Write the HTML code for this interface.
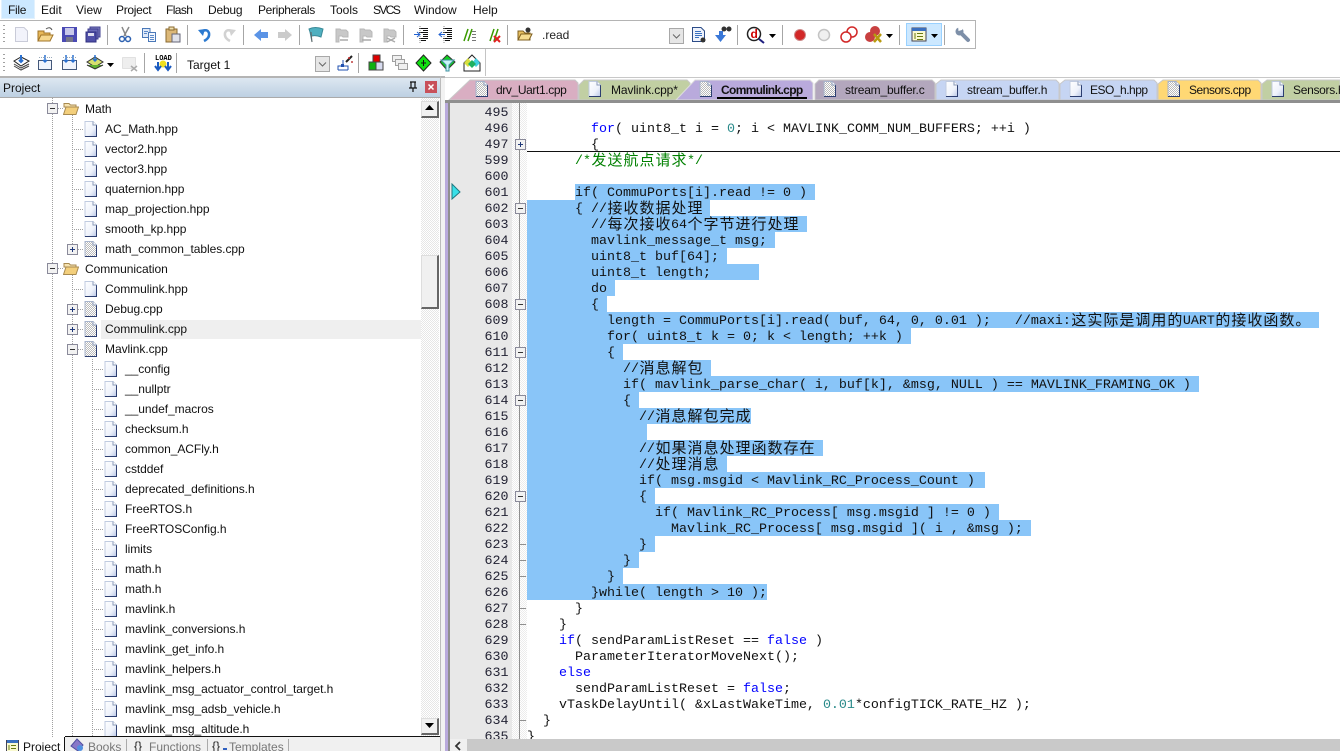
<!DOCTYPE html>
<html><head><meta charset="utf-8"><title>Keil</title>
<style>
html,body{margin:0;padding:0;background:#fff;width:1340px;height:751px;overflow:hidden}
body{position:relative;font-family:"Liberation Sans","Noto Sans CJK SC",sans-serif;font-size:12px;color:#000}
.a{position:absolute;white-space:pre}
.m{position:absolute;top:1px;line-height:19px;height:19px;white-space:pre;font-size:12px;color:#111}
.t{position:absolute;line-height:20px;height:20px;white-space:pre;font-size:12px;color:#111;letter-spacing:-.05px}
.l{position:absolute;left:449px;width:59.5px;height:16px;margin-top:2px;text-align:right;font:13.33px/16px "Liberation Mono",monospace;color:#223}
.c{position:absolute;left:527px;height:16px;margin-top:2px;white-space:pre;font:13.33px/16px "Liberation Mono","Noto Sans CJK SC",monospace;color:#111}
.c i{font:15px/16px "Noto Sans CJK SC",sans-serif;font-style:normal;display:inline-block;width:16px;text-align:center;height:16px;vertical-align:top;position:relative;top:-2px}
.s{position:absolute;height:16px;background:#89c5f8}
.b{color:#0000ff}.n{color:#2a8a8a}.g{color:#008000}
.tab{position:absolute;top:81px;line-height:18px;white-space:pre;font-size:12px;color:#111}
</style></head><body>
<svg width="0" height="0" style="position:absolute"><defs>
<linearGradient id="dg" x1="0" y1="0" x2="1" y2="1"><stop offset="0" stop-color="#fff"/><stop offset=".6" stop-color="#eef2fb"/><stop offset="1" stop-color="#b9c7e6"/></linearGradient>
<pattern id="ht" width="2" height="2" patternUnits="userSpaceOnUse"><rect width="2" height="2" fill="#fff"/><rect width="1" height="1" fill="#bbb"/><rect x="1" y="1" width="1" height="1" fill="#bbb"/></pattern>
<symbol id="d" viewBox="0 0 13 16" width="13" height="16"><path d="M1 .5H9L12.5 4V15.5H1Z" fill="url(#dg)" stroke="#c0cbe0"/><path d="M12.5 4V15.5H1" fill="none" stroke="#2c3e70"/><path d="M9 .5V4H12.5" fill="#fff" stroke="#8a9ab8"/></symbol>
<symbol id="h" viewBox="0 0 13 16" width="13" height="16"><path d="M1 .5H9L12.5 4V15.5H1Z" fill="url(#ht)" stroke="#a8b4cc"/><path d="M12.5 4V15.5H1" fill="none" stroke="#2c3e70"/><path d="M9 .5V4H12.5" fill="#fff" stroke="#8a9ab8"/></symbol>
<symbol id="f" viewBox="0 0 16 13" width="16" height="13"><path d="M1 3V1.5H6L7.500 3H13V5H1Z" fill="#f6e3b0" stroke="#a88a50"/><path d="M.5 12.500L3 5H15.500L13 12.500Z" fill="#f3cf7c" stroke="#a88a50"/></symbol>
<symbol id="pl" viewBox="0 0 11 11" width="11" height="11"><rect x=".5" y=".5" width="10" height="10" fill="#f2f2f2" stroke="#8a8a9a"/><path d="M3 5.500H8M5.500 3V8" stroke="#223a7a"/></symbol>
<symbol id="mi" viewBox="0 0 11 11" width="11" height="11"><rect x=".5" y=".5" width="10" height="10" fill="#f2f2f2" stroke="#8a8a9a"/><path d="M3 5.500H8" stroke="#333"/></symbol>
<symbol id="gf" viewBox="0 0 15 16" width="15" height="16"><path d="M2 15V2H6L7 3H12L14 5V10H9L8 9H5V15Z" fill="#c8c8c8" stroke="#b8b8b8"/></symbol>
<symbol id="dn" viewBox="0 0 7 4" width="7" height="4"><path d="M0 0H7L3.500 4Z" fill="#000"/></symbol>
<symbol id="cb" viewBox="0 0 15 16" width="15" height="16"><rect x=".5" y=".5" width="14" height="15" fill="#e6e6e6" stroke="#a8a8a8"/><path d="M4 6.500L7.500 10L11 6.500" fill="none" stroke="#666"/></symbol>
</defs></svg>

<!-- menu -->
<div class="a" style="left:1px;top:0;width:32px;height:18px;background:#cce8ff;border:1px solid #e2f1fd;border-top:0"></div>
<span class="m" style="left:8px;letter-spacing:-.3px">File</span><span class="m" style="left:41px">Edit</span><span class="m" style="left:76px">View</span><span class="m" style="left:116px;letter-spacing:-.3px">Project</span><span class="m" style="left:166px;letter-spacing:-.6px">Flash</span><span class="m" style="left:208px;letter-spacing:-.2px">Debug</span><span class="m" style="left:258px;letter-spacing:-.35px">Peripherals</span><span class="m" style="left:330px">Tools</span><span class="m" style="left:373px;letter-spacing:-1.6px">SVCS</span><span class="m" style="left:414px">Window</span><span class="m" style="left:473px">Help</span>

<!-- toolbar chrome -->
<div class="a" style="left:0;top:20px;width:975px;height:1px;background:#b4b4b4"></div>
<div class="a" style="left:0;top:21px;width:2px;height:28px;background:#fff"></div>
<div class="a" style="left:975px;top:20px;width:1px;height:29px;background:#b4b4b4"></div>
<div class="a" style="left:0;top:48px;width:976px;height:1px;background:#b4b4b4"></div>
<div class="a" style="left:0;top:76px;width:445px;height:2px;background:#b4b4b4"></div>
<div class="a" style="left:485px;top:49px;width:1px;height:28px;background:#c4c4c4"></div>
<div class="a" style="left:906px;top:23px;width:34px;height:21px;background:#cce8ff;border:1px solid #99d1ff"></div>

<svg class="a" style="left:0;top:0" width="1340" height="78" viewBox="0 0 1340 78">
<g fill="#a0a0a0"><rect x="3" y="25" width="2" height="1"/><rect x="3" y="29" width="2" height="1"/><rect x="3" y="33" width="2" height="1"/><rect x="3" y="37" width="2" height="1"/><rect x="3" y="41" width="2" height="1"/><rect x="3" y="54" width="2" height="1"/><rect x="3" y="58" width="2" height="1"/><rect x="3" y="62" width="2" height="1"/><rect x="3" y="66" width="2" height="1"/><rect x="3" y="70" width="2" height="1"/></g>
<g fill="#a6a6a6"><rect x="107" y="25" width="1" height="20"/><rect x="187" y="25" width="1" height="20"/><rect x="243" y="25" width="1" height="20"/><rect x="299" y="25" width="1" height="20"/><rect x="403" y="25" width="1" height="20"/><rect x="507" y="25" width="1" height="20"/><rect x="737" y="25" width="1" height="20"/><rect x="782" y="25" width="1" height="20"/><rect x="899" y="25" width="1" height="20"/><rect x="944" y="25" width="1" height="20"/><rect x="144" y="53" width="1" height="20"/><rect x="176" y="53" width="1" height="20"/><rect x="358" y="53" width="1" height="20"/></g>
<!-- row 1 -->
<path d="M15.500 27.500H24L27.500 31V41.500H15.500Z" fill="#f2f3fb" stroke="#c9cbd8"/>
<path d="M38 41V31H44V33H50V41Z" fill="#e8b858" stroke="#a07428"/><path d="M38 41L41 35H53L50 41Z" fill="#f6d78c" stroke="#a07428"/><path d="M46 29Q50 26 52 30" fill="none" stroke="#555"/>
<rect x="62" y="27" width="15" height="15" fill="#4a4ab4"/><rect x="65" y="28" width="9" height="7" fill="#c8c8ea"/><rect x="66" y="37" width="7" height="5" fill="#778"/>
<rect x="90" y="27" width="10" height="10" fill="#8080c0" stroke="#404090"/><rect x="88" y="29" width="10" height="10" fill="#6a6ab8" stroke="#404090"/><rect x="86" y="32" width="10" height="10" fill="#5050a8" stroke="#303080"/><rect x="88" y="33" width="6" height="3" fill="#dde"/>
<path d="M122 27L126 36M129 27L124 36" stroke="#888" stroke-width="1.500"/><circle cx="122" cy="39" r="2.500" fill="none" stroke="#2c60b0" stroke-width="1.500"/><circle cx="128" cy="39" r="2.500" fill="none" stroke="#2c60b0" stroke-width="1.500"/>
<path d="M142.500 28.500H150V37.500H142.500Z" fill="#dfe9f8" stroke="#4a78b8"/><path d="M148.500 32.500H155.500V41.500H148.500Z" fill="#f2f6fd" stroke="#4a78b8"/><path d="M144 31.500H148M144 33.500H147M150 35.500H154M150 37.500H154M150 39.500H154" stroke="#5a88c8"/>
<rect x="166" y="29" width="11" height="13" fill="#dcb878" stroke="#8a6a30"/><rect x="169" y="27" width="5" height="3" fill="#f0e0b0" stroke="#8a6a30"/><rect x="172" y="34" width="8" height="8" fill="#e0e2ea" stroke="#667"/>
<path d="M201 32Q207 28 209 33Q210 38 204 41" fill="none" stroke="#2c7ad0" stroke-width="2.500"/><path d="M198 30L205 29L203 36Z" fill="#2c7ad0"/>
<path d="M233 32Q227 28 225 33Q224 38 230 41" fill="none" stroke="#d2d2d2" stroke-width="2.500"/><path d="M236 30L229 29L231 36Z" fill="#d2d2d2"/>
<path d="M254 35L261 29V32H268V38H261V41Z" fill="#5b94e6"/><path d="M292 35L285 29V32H278V38H285V41Z" fill="#cbcbcb"/>
<path d="M312 42L310 32L309 29Q315 26 323 29L321 37Q316 35 312 36" fill="#4fb0c0" stroke="#3a8a98"/><path d="M312 42L311 32" stroke="#666"/>
<use href="#gf" x="334" y="27"/><use href="#gf" x="358" y="27"/><use href="#gf" x="382" y="27"/>
<path d="M340 40H348M362 40H371M387 38L395 42M395 38L387 42" stroke="#aaa" stroke-width="1.500"/>
<g stroke="#111"><path d="M419 28.500H428M423 30.500H428M419 32.500H428M423 34.500H428M423 36.500H428M419 38.500H428M421 40.500H426"/><path d="M443 28.500H452M447 30.500H452M443 32.500H452M447 34.500H452M447 36.500H452M443 38.500H452M445 40.500H450"/><path d="M420 26V43M444 26V43" stroke="#888" stroke-dasharray="1 1"/></g>
<path d="M414 34.500H420M417 32L420 34.500L417 37M445 34.500H439M442 32L439 34.500L442 37" stroke="#2060d0" fill="none"/>
<path d="M464 41L468 29M468 41L472 29M490 41L494 29M494 41L498 29" stroke="#3a9a00" stroke-width="1.500"/><path d="M472 31.500H476M472 34.500H476M472 37.500H476M472 40.500H476" stroke="#777"/>
<path d="M494 36L500 42M500 36L494 42" stroke="#e02020" stroke-width="2"/>
<path d="M518 40V31H523L525 33H530V40Z" fill="#e8c060" stroke="#806020"/><path d="M518 40L521 34H532L529 40Z" fill="#f6dc90" stroke="#806020"/><circle cx="528" cy="30" r="2.500" fill="#333"/>
<use href="#cb" x="669" y="28"/>
<path d="M692.500 27.500H701L704.500 31V41.500H692.500Z" fill="#eef2fb" stroke="#2c4c88"/><path d="M695 31.500H701M695 33.500H702M695 35.500H702M695 37.500H699" stroke="#3a70c0"/><circle cx="703" cy="40" r="2.500" fill="#333"/>
<path d="M715 35H719V31H723V35H726L720.500 42Z" fill="#3a78d8"/><circle cx="724" cy="29" r="2.500" fill="#333"/><circle cx="729" cy="29" r="2.500" fill="#333"/>
<circle cx="754" cy="34" r="6.500" fill="#fff" stroke="#222" stroke-width="1.500"/><path d="M759 39L764 43" stroke="#202080" stroke-width="2"/><text x="750.500" y="38" font-family="Liberation Sans" font-size="12" font-weight="bold" fill="#d00000">d</text>
<use href="#dn" x="769" y="34"/>
<circle cx="800" cy="35" r="5.500" fill="#d22828" stroke="#c88"/><circle cx="824" cy="35" r="5.500" fill="#f0f0f0" stroke="#c4c4c4" stroke-width="1.500"/>
<circle cx="852" cy="32" r="5" fill="#fff" stroke="#d22828" stroke-width="1.500"/><circle cx="846" cy="37" r="5" fill="#fff" stroke="#d22828" stroke-width="1.500"/>
<circle cx="875" cy="31" r="5" fill="#c84040"/><circle cx="870" cy="37" r="5" fill="#c84040"/><path d="M874 34L881 42M881 34L874 42" stroke="#b89a10" stroke-width="2.500"/>
<use href="#dn" x="886" y="34"/>
<rect x="912" y="28" width="14" height="13" fill="#fafad0" stroke="#445"/><rect x="912" y="28" width="14" height="3" fill="#3a70c0"/><path d="M915 33V39M917 33.500H923M917 36.500H923M917 39.500H923" stroke="#6a7a10"/><use href="#dn" x="931" y="34"/>
<path d="M961 33L968 40" stroke="#7d8fa8" stroke-width="4" stroke-linecap="round"/><circle cx="959.500" cy="31.500" r="4" fill="#7d8fa8"/><path d="M958 26L958.500 31L962 30L964 27Z" fill="#fff"/>
<!-- row 2 -->
<path d="M14 61L21 57L29 61L21 66Z" fill="#fff" stroke="#222"/><path d="M14 64L21 68L29 64M14 66L21 70L29 66" fill="none" stroke="#444"/><path d="M21 55V62M19 60L21 62L23 60" stroke="#2a70d0" stroke-width="2" fill="none"/>
<g fill="#f0f4fc" stroke="#44587a"><rect x="38.500" y="60.500" width="13" height="9"/><rect x="62.500" y="60.500" width="14" height="9"/></g><path d="M45 55V62M43 60L45 62L47 60M66 55V62M64 60L66 62L68 60M73 55V62M71 60L73 62L75 60" stroke="#2a70d0" stroke-width="1.500" fill="none"/><path d="M39 57.500H52M63 57.500H77" stroke="#9ab" stroke-dasharray="1 1"/>
<path d="M87 62L95 57L103 62L95 67Z" fill="#d6e070" stroke="#333"/><path d="M87 65L95 69L103 65" fill="#60b030" stroke="#333"/><path d="M95 55V61M93 59L95 61L97 59" stroke="#2a70d0" stroke-width="1.500" fill="none"/><use href="#dn" x="107" y="63"/>
<rect x="122.500" y="57.500" width="13" height="11" fill="#eee" stroke="#ccc" stroke-dasharray="1 1"/><path d="M131 66L137 71M137 66L131 71" stroke="#aaa" stroke-width="1.500"/>
<text x="155" y="60" font-family="Liberation Mono" font-size="7" font-weight="bold" fill="#000">LOAD</text><circle cx="163" cy="64" r="3.500" fill="#f0e020"/><path d="M158 62V69M155 66L158 70L161 66M168 62V69M165 66L168 70L171 66" stroke="#1a5ac0" stroke-width="2" fill="none"/>
<text x="187" y="69" font-family="Liberation Sans" font-size="12" fill="#111">Target 1</text>
<use href="#cb" x="315" y="56"/>
<path d="M346 62L352 56" stroke="#222" stroke-width="2"/><path d="M343 60V66M338 70H348M338 70V66H348V70" fill="none" stroke="#2050b0"/><rect x="341" y="64" width="3" height="3" fill="#2050b0"/><circle cx="349" cy="58" r="1" fill="#d03030"/><circle cx="352" cy="62" r="1" fill="#c04040"/>
<rect x="373" y="55" width="7" height="7" fill="#e00000" stroke="#444"/><rect x="369" y="62" width="7" height="8" fill="#10b010" stroke="#444"/><rect x="376" y="62" width="7" height="8" fill="#d8dcf0" stroke="#444"/>
<g fill="#f0f0f0" stroke="#a0a0a0"><rect x="392.500" y="55.500" width="9" height="6"/><rect x="395.500" y="59.500" width="9" height="6"/><rect x="398.500" y="63.500" width="9" height="6"/></g>
<path d="M423.500 55L431 63L423.500 71L416 63Z" fill="#10e010" stroke="#222"/><path d="M421 63H426M423.500 60V66" stroke="#111"/>
<path d="M447 55L455 62L447 70L440 62Z" fill="#10d020" stroke="#333"/><path d="M441 60H454L449 65V71H446V65Z" fill="#c8f4f8" stroke="#4090a0"/>
<path d="M472 55L480 63V71H464V63Z" fill="#fff" stroke="#222"/><path d="M468 58L472 63L468 67L464 63Z" fill="#d8e040"/><path d="M476 58L480 63L476 67L472 63Z" fill="#40d0e0"/><path d="M472 60L476 64L472 68L468 64Z" fill="#20b060"/>
</svg>
<span class="a" style="left:542px;top:28px;line-height:15px;color:#222">.read</span>

<!-- project header -->
<div class="a" style="left:0;top:78px;width:441px;height:19px;background:linear-gradient(#dde7f1,#bdd0e2)"></div>
<div class="a" style="left:0;top:97px;width:441px;height:1px;background:#aaa"></div>
<span class="a" style="left:3px;top:80px;line-height:17px;color:#111">Project</span>
<svg class="a" style="left:408px;top:80px" width="30" height="15"><path d="M2 2H8M3 2V8H7V2M1 8H9M5 8V12" fill="none" stroke="#111" stroke-width="1.200"/><rect x="17" y="1" width="12" height="12" fill="#c8505a"/><path d="M20.500 4.500L25.500 9.500M25.500 4.500L20.500 9.500" stroke="#fff" stroke-width="1.500"/></svg>

<!-- tree -->
<div class="a" style="left:0;top:98px;width:441px;height:639px;overflow:hidden;background:#fff">
<div class="a" style="left:101px;top:222px;width:320px;height:19px;background:#efefef"></div>
<div class="a" style="left:421px;top:0;width:18px;height:639px;background-color:#f4f4f4;background-image:conic-gradient(#e6e6e6 25%,#fff 0 50%,#e6e6e6 0 75%,#fff 0);background-size:2px 2px"></div>
<div class="a" style="left:421px;top:3px;width:15px;height:14px;background:#f0f0f0;border:1px solid #ddd;border-right:2px solid #666;border-bottom:2px solid #666"></div>
<svg class="a" style="left:425px;top:7px" width="10" height="6"><path d="M0 5H9L4.500 0Z"/></svg>
<div class="a" style="left:421px;top:157px;width:15px;height:51px;background:#f0f0f0;border:1px solid #ddd;border-right:2px solid #666;border-bottom:2px solid #666"></div>
<div class="a" style="left:421px;top:620px;width:15px;height:14px;background:#f0f0f0;border:1px solid #ddd;border-right:2px solid #666;border-bottom:2px solid #666"></div>
<svg class="a" style="left:425px;top:625px" width="10" height="6"><path d="M0 0H9L4.500 5Z"/></svg>
</div>
<svg class="a" style="left:0;top:98px" width="421" height="639" viewBox="0 98 421 639" fill="none">
<g stroke="#a0a0a0" stroke-dasharray="1 1">
<path d="M52.500 98V737M72.500 115V255M72.500 275V737M92.500 359V737"/>
<path d="M58 108.500H63M72 129.500H84M72 149.500H84M72 169.500H84M72 189.500H84M72 209.500H84M72 229.500H84M78 249.500H84M58 268.500H63M72 289.500H84M78 309.500H84M78 329.500H84M78 349.500H84"/>
<path d="M92 369.500H104M92 389.500H104M92 409.500H104M92 429.500H104M92 449.500H104M92 469.500H104M92 489.500H104M92 509.500H104M92 529.500H104M92 549.500H104M92 569.500H104M92 589.500H104M92 609.500H104M92 629.500H104M92 649.500H104M92 669.500H104M92 689.500H104M92 709.500H104M92 729.500H104"/>
</g>
<use href="#mi" x="47" y="103"/><use href="#f" x="63" y="102"/><use href="#mi" x="47" y="263"/><use href="#f" x="63" y="262"/>
<use href="#d" x="84" y="121"/><use href="#d" x="84" y="141"/><use href="#d" x="84" y="161"/><use href="#d" x="84" y="181"/><use href="#d" x="84" y="201"/><use href="#d" x="84" y="221"/><use href="#pl" x="67" y="244"/><use href="#h" x="84" y="241"/>
<use href="#d" x="84" y="281"/><use href="#pl" x="67" y="304"/><use href="#h" x="84" y="301"/><use href="#pl" x="67" y="324"/><use href="#h" x="84" y="321"/><use href="#mi" x="67" y="344"/><use href="#h" x="84" y="341"/>
<use href="#d" x="104" y="361"/><use href="#d" x="104" y="381"/><use href="#d" x="104" y="401"/><use href="#d" x="104" y="421"/><use href="#d" x="104" y="441"/><use href="#d" x="104" y="461"/><use href="#d" x="104" y="481"/><use href="#d" x="104" y="501"/><use href="#d" x="104" y="521"/><use href="#d" x="104" y="541"/><use href="#d" x="104" y="561"/><use href="#d" x="104" y="581"/><use href="#d" x="104" y="601"/><use href="#d" x="104" y="621"/><use href="#d" x="104" y="641"/><use href="#d" x="104" y="661"/><use href="#d" x="104" y="681"/><use href="#d" x="104" y="701"/><use href="#d" x="104" y="721"/>
</svg>
<span class="t" style="left:85px;top:99px">Math</span>
<span class="t" style="left:105px;top:119px">AC_Math.hpp</span>
<span class="t" style="left:105px;top:139px">vector2.hpp</span>
<span class="t" style="left:105px;top:159px">vector3.hpp</span>
<span class="t" style="left:105px;top:179px">quaternion.hpp</span>
<span class="t" style="left:105px;top:199px">map_projection.hpp</span>
<span class="t" style="left:105px;top:219px">smooth_kp.hpp</span>
<span class="t" style="left:105px;top:239px">math_common_tables.cpp</span>
<span class="t" style="left:85px;top:259px">Communication</span>
<span class="t" style="left:105px;top:279px">Commulink.hpp</span>
<span class="t" style="left:105px;top:299px">Debug.cpp</span>
<span class="t" style="left:105px;top:319px">Commulink.cpp</span>
<span class="t" style="left:105px;top:339px">Mavlink.cpp</span>
<span class="t" style="left:125px;top:359px">__config</span>
<span class="t" style="left:125px;top:379px">__nullptr</span>
<span class="t" style="left:125px;top:399px">__undef_macros</span>
<span class="t" style="left:125px;top:419px">checksum.h</span>
<span class="t" style="left:125px;top:439px">common_ACFly.h</span>
<span class="t" style="left:125px;top:459px">cstddef</span>
<span class="t" style="left:125px;top:479px">deprecated_definitions.h</span>
<span class="t" style="left:125px;top:499px">FreeRTOS.h</span>
<span class="t" style="left:125px;top:519px">FreeRTOSConfig.h</span>
<span class="t" style="left:125px;top:539px">limits</span>
<span class="t" style="left:125px;top:559px">math.h</span>
<span class="t" style="left:125px;top:579px">math.h</span>
<span class="t" style="left:125px;top:599px">mavlink.h</span>
<span class="t" style="left:125px;top:619px">mavlink_conversions.h</span>
<span class="t" style="left:125px;top:639px">mavlink_get_info.h</span>
<span class="t" style="left:125px;top:659px">mavlink_helpers.h</span>
<span class="t" style="left:125px;top:679px">mavlink_msg_actuator_control_target.h</span>
<span class="t" style="left:125px;top:699px">mavlink_msg_adsb_vehicle.h</span>
<span class="t" style="left:125px;top:719px">mavlink_msg_altitude.h</span>

<!-- bottom-left tabs -->
<div class="a" style="left:0;top:737px;width:441px;height:14px;background:#f0f0f0"></div>
<div class="a" style="left:65px;top:736px;width:376px;height:1px;background:#111"></div>
<div class="a" style="left:0;top:737px;width:65px;height:14px;background:#fff;border-right:1px solid #111;box-sizing:border-box"></div>
<span class="a" style="left:23px;top:740px;line-height:15px;color:#111">Project</span>
<span class="a" style="left:88px;top:740px;line-height:15px;color:#777">Books</span>
<span class="a" style="left:149px;top:740px;line-height:15px;color:#777">Functions</span>
<span class="a" style="left:229px;top:740px;line-height:15px;color:#777">Templates</span>
<span class="a" style="left:134px;top:739px;line-height:15px;color:#222">{}</span>
<span class="a" style="left:212px;top:739px;line-height:15px;color:#222">{}</span>
<svg class="a" style="left:0;top:737px" width="300" height="14"><rect x="6.500" y="3.500" width="12" height="11" fill="#fafad0" stroke="#445"/><rect x="7" y="3" width="11" height="3" fill="#3a70c0"/><path d="M9 8V13M11 8.500H16M11 11.500H16" stroke="#6a7a10"/><path d="M71 9L77 2L83 8L78 14Z" fill="#8878c8" stroke="#5050a0"/><circle cx="80" cy="11" r="3" fill="#5090e0"/><path d="M126.500 2V14M207.500 2V14M288.500 2V14" stroke="#aaa"/><path d="M223 12H227" stroke="#3060c0" stroke-width="2"/></svg>

<!-- separators -->
<div class="a" style="left:440px;top:76px;width:1px;height:675px;background:#bbb"></div>
<div class="a" style="left:441px;top:78px;width:4px;height:673px;background:#f2f2f2"></div>

<!-- tabs -->
<svg class="a" style="left:445px;top:76px" width="895" height="28" viewBox="445 76 895 28">
<rect x="445" y="76" width="895" height="24" fill="#fff"/>
<rect x="445" y="77" width="895" height="1" fill="#c8c8c8"/>
<path d="M449 100L470 80H575L578 83V100Z" fill="#d9aec2" stroke="#c8c8c8"/>
<path d="M579 100V85L584 80H687L690 83V100Z" fill="#c1cfa3" stroke="#c8c8c8"/>
<path d="M676 100L695 80H810L813 83V100Z" fill="#b9aadc" stroke="#ddd"/>
<path d="M815 100V84L819 80H932L935 83V100Z" fill="#b3a7bd" stroke="#c8c8c8"/>
<path d="M936 100V84L941 80H1056L1059 83V100Z" fill="#c6d5f3" stroke="#c8c8c8"/>
<path d="M1060 100V84L1065 80H1154L1157 83V100Z" fill="#c6d5f3" stroke="#c8c8c8"/>
<path d="M1158 100V84L1163 80H1258L1261 83V100Z" fill="#ffd874" stroke="#c8c8c8"/>
<path d="M1262 100V84L1267 80H1340V100Z" fill="#c1cfa3" stroke="#c8c8c8"/>
<rect x="445" y="100" width="895" height="3" fill="#8f8f8f"/>
<rect x="717" y="97" width="90" height="2" fill="#000"/>
<use href="#h" x="475" y="81"/><use href="#d" x="588" y="81"/><use href="#h" x="699" y="81"/><use href="#h" x="823" y="81"/><use href="#d" x="945" y="81"/><use href="#d" x="1069" y="81"/><use href="#h" x="1167" y="81"/><use href="#d" x="1271" y="81"/>
</svg>
<span class="tab" style="left:496px;letter-spacing:-.38px">drv_Uart1.cpp</span>
<span class="tab" style="left:611px;letter-spacing:-.1px">Mavlink.cpp*</span>
<span class="tab" style="left:721px;font-weight:bold;letter-spacing:-.65px">Commulink.cpp</span>
<span class="tab" style="left:845px;letter-spacing:-.2px">stream_buffer.c</span>
<span class="tab" style="left:967px;letter-spacing:-.2px">stream_buffer.h</span>
<span class="tab" style="left:1090px;letter-spacing:-.5px">ESO_h.hpp</span>
<span class="tab" style="left:1189px;letter-spacing:-.45px">Sensors.cpp</span>
<span class="tab" style="left:1293px;letter-spacing:-.3px">Sensors.h</span>

<!-- editor -->
<div class="a" style="left:445px;top:103px;width:3px;height:648px;background:#b9aadc"></div>
<div class="a" style="left:448px;top:103px;width:2px;height:648px;background:#8f8f8f"></div>
<div class="a" style="left:450px;top:103px;width:62px;height:648px;background:#e8e8e8"></div>
<div class="a" style="left:512px;top:103px;width:15px;height:648px;background-color:#fafafa;background-image:conic-gradient(#ececec 25%,#fff 0 50%,#ececec 0 75%,#fff 0);background-size:2px 2px"></div>
<div class="a" style="left:519px;top:103px;width:1px;height:636px;background:#8f8f8f"></div>
<svg class="a" style="left:512px;top:136px" width="16" height="610" viewBox="512 136 16 610">
<use href="#pl" x="515" y="139"/><use href="#mi" x="515" y="203"/><use href="#mi" x="515" y="299"/><use href="#mi" x="515" y="347"/><use href="#mi" x="515" y="395"/><use href="#mi" x="515" y="491"/>
<path d="M520 544.500H526M520 560.500H526M520 576.500H526M520 608.500H526M520 624.500H526M520 720.500H526" stroke="#8f8f8f"/>
</svg>
<svg class="a" style="left:451px;top:183px" width="12" height="18"><path d="M1 1L9 9L1 16Z" fill="#39e0e8" stroke="#207880"/></svg>

<!-- selection -->
<div class="s" style="left:575px;top:184px;width:240px"></div>
<div class="s" style="left:527px;top:200px;width:183px"></div>
<div class="s" style="left:527px;top:216px;width:280px"></div>
<div class="s" style="left:527px;top:232px;width:248px"></div>
<div class="s" style="left:527px;top:248px;width:200px"></div>
<div class="s" style="left:527px;top:264px;width:232px"></div>
<div class="s" style="left:527px;top:280px;width:88px"></div>
<div class="s" style="left:527px;top:296px;width:80px"></div>
<div class="s" style="left:527px;top:312px;width:792px"></div>
<div class="s" style="left:527px;top:328px;width:384px"></div>
<div class="s" style="left:527px;top:344px;width:96px"></div>
<div class="s" style="left:527px;top:360px;width:184px"></div>
<div class="s" style="left:527px;top:376px;width:672px"></div>
<div class="s" style="left:527px;top:392px;width:112px"></div>
<div class="s" style="left:527px;top:408px;width:224px"></div>
<div class="s" style="left:527px;top:424px;width:120px"></div>
<div class="s" style="left:527px;top:440px;width:296px"></div>
<div class="s" style="left:527px;top:456px;width:200px"></div>
<div class="s" style="left:527px;top:472px;width:458px"></div>
<div class="s" style="left:527px;top:488px;width:128px"></div>
<div class="s" style="left:527px;top:504px;width:472px"></div>
<div class="s" style="left:527px;top:520px;width:504px"></div>
<div class="s" style="left:527px;top:536px;width:128px"></div>
<div class="s" style="left:527px;top:552px;width:112px"></div>
<div class="s" style="left:527px;top:568px;width:96px"></div>
<div class="s" style="left:527px;top:584px;width:240px"></div>
<div class="a" style="left:527px;top:151px;width:813px;height:1px;background:#111"></div>

<!-- line numbers -->
<div class="l" style="top:104px">495</div><div class="l" style="top:120px">496</div><div class="l" style="top:136px">497</div><div class="l" style="top:152px">599</div><div class="l" style="top:168px">600</div><div class="l" style="top:184px">601</div><div class="l" style="top:200px">602</div><div class="l" style="top:216px">603</div><div class="l" style="top:232px">604</div><div class="l" style="top:248px">605</div><div class="l" style="top:264px">606</div><div class="l" style="top:280px">607</div><div class="l" style="top:296px">608</div><div class="l" style="top:312px">609</div><div class="l" style="top:328px">610</div><div class="l" style="top:344px">611</div><div class="l" style="top:360px">612</div><div class="l" style="top:376px">613</div><div class="l" style="top:392px">614</div><div class="l" style="top:408px">615</div><div class="l" style="top:424px">616</div><div class="l" style="top:440px">617</div><div class="l" style="top:456px">618</div><div class="l" style="top:472px">619</div><div class="l" style="top:488px">620</div><div class="l" style="top:504px">621</div><div class="l" style="top:520px">622</div><div class="l" style="top:536px">623</div><div class="l" style="top:552px">624</div><div class="l" style="top:568px">625</div><div class="l" style="top:584px">626</div><div class="l" style="top:600px">627</div><div class="l" style="top:616px">628</div><div class="l" style="top:632px">629</div><div class="l" style="top:648px">630</div><div class="l" style="top:664px">631</div><div class="l" style="top:680px">632</div><div class="l" style="top:696px">633</div><div class="l" style="top:712px">634</div><div class="l" style="top:728px;height:11px;overflow:hidden">635</div>

<!-- code -->
<div class="c" style="top:120px">        <span class="b">for</span>( uint8_t i = <span class="n">0</span>; i &lt; MAVLINK_COMM_NUM_BUFFERS; ++i )</div>
<div class="c" style="top:136px;height:13px;overflow:hidden">        {</div>
<div class="c g" style="top:152px">      /*<i>发</i><i>送</i><i>航</i><i>点</i><i>请</i><i>求</i>*/</div>
<div class="c" style="top:184px">      if( CommuPorts[i].read != 0 )</div>
<div class="c" style="top:200px">      { //<i>接</i><i>收</i><i>数</i><i>据</i><i>处</i><i>理</i></div>
<div class="c" style="top:216px">        //<i>每</i><i>次</i><i>接</i><i>收</i>64<i>个</i><i>字</i><i>节</i><i>进</i><i>行</i><i>处</i><i>理</i></div>
<div class="c" style="top:232px">        mavlink_message_t msg;</div>
<div class="c" style="top:248px">        uint8_t buf[64];</div>
<div class="c" style="top:264px">        uint8_t length;</div>
<div class="c" style="top:280px">        do</div>
<div class="c" style="top:296px">        {</div>
<div class="c" style="top:312px">          length = CommuPorts[i].read( buf, 64, 0, 0.01 );   //maxi:<i>这</i><i>实</i><i>际</i><i>是</i><i>调</i><i>用</i><i>的</i>UART<i>的</i><i>接</i><i>收</i><i>函</i><i>数</i><i>。</i></div>
<div class="c" style="top:328px">          for( uint8_t k = 0; k &lt; length; ++k )</div>
<div class="c" style="top:344px">          {</div>
<div class="c" style="top:360px">            //<i>消</i><i>息</i><i>解</i><i>包</i></div>
<div class="c" style="top:376px">            if( mavlink_parse_char( i, buf[k], &amp;msg, NULL ) == MAVLINK_FRAMING_OK )</div>
<div class="c" style="top:392px">            {</div>
<div class="c" style="top:408px">              //<i>消</i><i>息</i><i>解</i><i>包</i><i>完</i><i>成</i></div>
<div class="c" style="top:440px">              //<i>如</i><i>果</i><i>消</i><i>息</i><i>处</i><i>理</i><i>函</i><i>数</i><i>存</i><i>在</i></div>
<div class="c" style="top:456px">              //<i>处</i><i>理</i><i>消</i><i>息</i></div>
<div class="c" style="top:472px">              if( msg.msgid &lt; Mavlink_RC_Process_Count )</div>
<div class="c" style="top:488px">              {</div>
<div class="c" style="top:504px">                if( Mavlink_RC_Process[ msg.msgid ] != 0 )</div>
<div class="c" style="top:520px">                  Mavlink_RC_Process[ msg.msgid ]( i , &amp;msg );</div>
<div class="c" style="top:536px">              }</div>
<div class="c" style="top:552px">            }</div>
<div class="c" style="top:568px">          }</div>
<div class="c" style="top:584px">        }while( length &gt; 10 );</div>
<div class="c" style="top:600px">      }</div>
<div class="c" style="top:616px">    }</div>
<div class="c" style="top:632px">    <span class="b">if</span>( sendParamListReset == <span class="b">false</span> )</div>
<div class="c" style="top:648px">      ParameterIteratorMoveNext();</div>
<div class="c" style="top:664px">    <span class="b">else</span></div>
<div class="c" style="top:680px">      sendParamListReset = <span class="b">false</span>;</div>
<div class="c" style="top:696px">    vTaskDelayUntil( &amp;xLastWakeTime, <span class="n">0.01</span>*configTICK_RATE_HZ );</div>
<div class="c" style="top:712px">  }</div>
<div class="c" style="top:728px">}</div>

<!-- editor h-scroll -->
<div class="a" style="left:450px;top:739px;width:890px;height:12px;background:#c9c9c9"></div>
<div class="a" style="left:450px;top:739px;width:17px;height:12px;background:#f0f0f0"></div>
<svg class="a" style="left:454px;top:741px" width="10" height="10"><path d="M6 1L2 5L6 9" fill="none" stroke="#333" stroke-width="1.800"/></svg>
</body></html>
